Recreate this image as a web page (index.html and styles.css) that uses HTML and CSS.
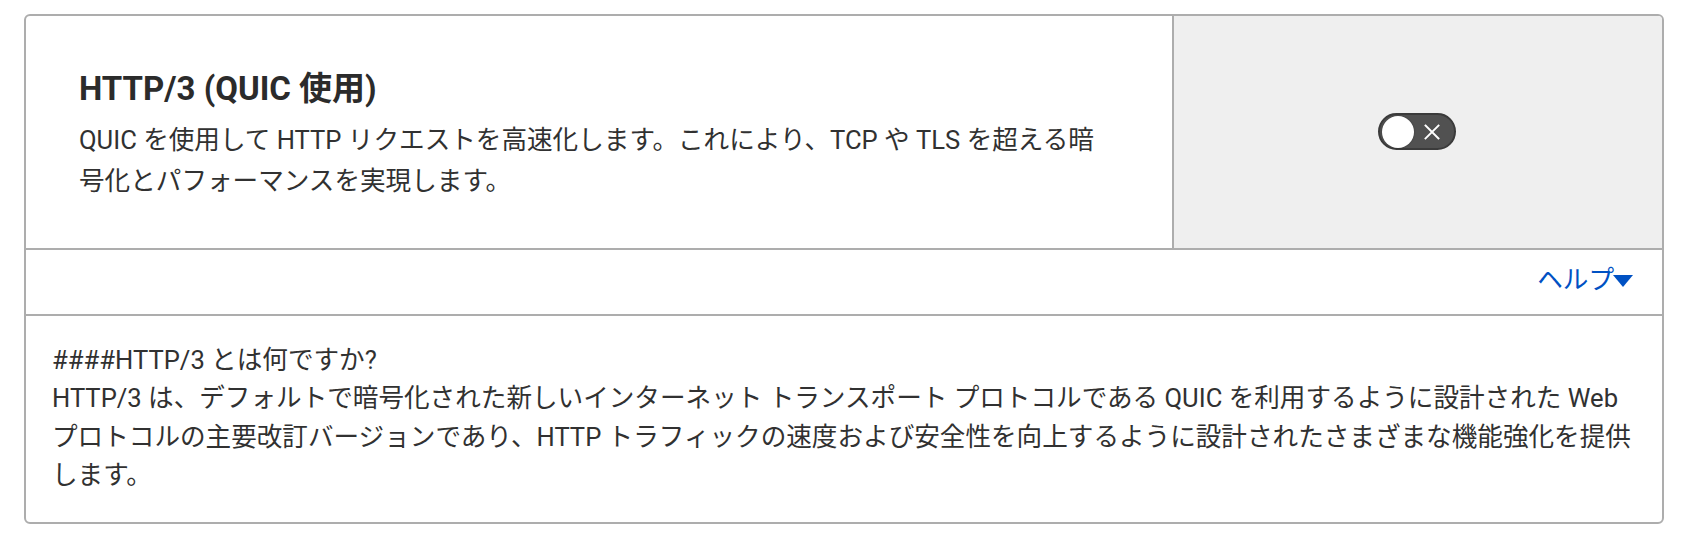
FILE: index.html
```html
<!DOCTYPE html>
<html lang="ja">
<head>
    <meta charset="utf-8">
    <title>HTTP/3 (QUIC 使用)</title>
    <link rel="stylesheet" href="styles.css">
</head>
<body>
    <div class="page">
        <div class="card">
            <div class="setting">
                <div class="setting-info">
                    <h3 class="setting-title">HTTP/3 (QUIC 使用)</h3>
                    <p class="setting-desc">QUIC を使用して HTTP リクエストを高速化します。これにより、TCP や TLS を超える暗号化とパフォーマンスを実現します。</p>
                </div>
                <div class="setting-control">
                    <button class="toggle" type="button" aria-label="HTTP/3 (QUIC 使用)">
                        <span class="toggle-knob"></span>
                        <svg class="toggle-icon" width="16" height="16" viewBox="0 0 16 16">
                            <path d="M1.5 1.5 L14.5 14.5 M14.5 1.5 L1.5 14.5" stroke="#fff" stroke-width="1.9" stroke-linecap="square" fill="none"/>
                        </svg>
                    </button>
                </div>
            </div>
            <div class="help-bar">
                <a class="help-link" href="#">ヘルプ<span class="caret"></span></a>
            </div>
            <div class="help-body">
                ####HTTP/3 とは何ですか?<br>
                HTTP/3 は、デフォルトで暗号化された新しいインターネット トランスポート プロトコルである QUIC を利用するように設計された Web プロトコルの主要改訂バージョンであり、HTTP トラフィックの速度および安全性を向上するように設計されたさまざまな機能強化を提供します。
            </div>
        </div>
    </div>
</body>
</html>
```

FILE: styles.css
```css
* {box-sizing: border-box;}
body {
    margin: 0;
    background-color: #fff;
    color: #313131;
    font-family: Roboto, "Noto Sans CJK JP", sans-serif;
    font-size: 25.6px;
}
.page {padding: 14px 34px 12px 24px;}

.card {
    border: 2px solid #adadad;
    border-radius: 6px;
    overflow: hidden;
}

/* setting row */
.setting {
    display: flex;
    border-bottom: 2px solid #adadad;
}
.setting-info {
    flex: 1;
    padding: 52px 53px 46px;
}
.setting-title {
    margin: 0 0 11px;
    font-size: 33px;
    line-height: 41px;
    font-weight: 700;
    color: #2b2b2b;
}
.setting-desc {
    margin: 0;
    line-height: 41px;
}
.setting-control {
    width: 490px;
    display: flex;
    align-items: center;
    justify-content: center;
    background-color: #efefef;
    border-left: 2px solid #adadad;
}

/* toggle switch */
.toggle {
    display: flex;
    align-items: center;
    width: 78px;
    height: 37px;
    padding: 0 0 0 2px;
    margin: 0 2px 1px 0;
    border: 2px solid #3b3b3b;
    border-radius: 19px;
    background-color: #515151;
    cursor: pointer;
}
.toggle-knob {
    width: 32px;
    height: 32px;
    border-radius: 50%;
    background-color: #fff;
    box-shadow: 0 0 2px rgba(0, 0, 0, 0.35);
}
.toggle-icon {
    display: block;
    margin: 1px 0 0 10px;
}

/* help */
.help-bar {
    display: flex;
    justify-content: flex-end;
    align-items: center;
    height: 66px;
    padding: 0 29px 2px 0;
    border-bottom: 2px solid #adadad;
}
.help-link {
    display: flex;
    align-items: center;
    color: #0051c3;
    text-decoration: none;
    line-height: 1;
}
.caret {
    width: 0;
    height: 0;
    margin-left: -1px;
    border-left: 10.5px solid transparent;
    border-right: 10.5px solid transparent;
    border-top: 12px solid #0051c3;
}
.help-body {
    padding: 25px 18px 27px 26px;
    line-height: 38.4px;
}
```
